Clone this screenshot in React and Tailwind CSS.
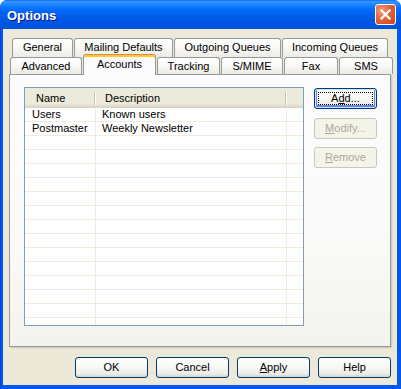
const FONT = "font-['Liberation_Sans',Arial,sans-serif]";

function Tab({ w, children, selected }) {
  if (selected) {
    return (
      <div
        className={`relative z-10 -mt-[3px] h-[21px] ${w} shrink-0 rounded-t-[3px] border border-b-0 border-[#919B9C] border-t-[#E68B2C] bg-[#FCFCFE] flex items-start justify-center pt-[3px] shadow-[inset_0_2px_0_#FFC83C]`}
      >
        <span className="leading-[13px]">{children}</span>
      </div>
    );
  }
  return (
    <div
      className={`h-full ${w} shrink-0 rounded-t-[3px] border border-b-0 border-[#919B9C] bg-[linear-gradient(to_bottom,#FFFFFF_0%,#FAFAF8_40%,#ECEBE5_100%)] flex items-start justify-center pt-[2px]`}
    >
      <span className="leading-[13px]">{children}</span>
    </div>
  );
}

function Btn({ children, w = "w-[73px]", disabled, isDefault, className = "" }) {
  if (disabled) {
    return (
      <div
        className={`${w} h-[21px] shrink-0 rounded-[3px] border border-[#C9C7BA] bg-[#F5F4EA] text-[#ACA899] flex items-center justify-center ${className}`}
      >
        {children}
      </div>
    );
  }
  return (
    <div
      className={`relative ${w} h-[21px] shrink-0 rounded-[3px] border border-[#003C74] bg-[linear-gradient(to_bottom,#FFFFFF_0%,#F7F7F4_50%,#ECEBE6_85%,#D6D0C5_100%)] flex items-center justify-center ${
        isDefault ? "shadow-[inset_0_0_0_1px_#CEE7FF,inset_0_-1px_0_2px_#6982EE]" : ""
      } ${className}`}
    >
      {isDefault && (
        <div className="absolute inset-[3px] border border-dotted border-[#000000]" />
      )}
      <span className="relative">{children}</span>
    </div>
  );
}

const rows = [
  ["Users", "Known users"],
  ["Postmaster", "Weekly Newsletter"],
];

export default function App() {
  const allRows = [];
  for (let i = 0; i < 16; i++) allRows.push(rows[i] || ["", ""]);
  return (
    <div
      className={`w-[401px] h-[389px] flex flex-col bg-[linear-gradient(to_right,#0831D9_0px,#0055EA_1px,#0058EE_3px)] ${FONT} text-[11px] text-black overflow-hidden rounded-t-[7px]`}
    >
      {/* Title bar */}
      <div className="h-[29px] shrink-0 flex items-center pl-[7px] pr-[5px] rounded-t-[7px] bg-[linear-gradient(to_bottom,#0058EE_0px,#3A93FF_1px,#288EFF_3px,#127DFF_6px,#0369FC_10px,#0262EE_14px,#0057E5_20px,#0054E3_26px,#0050DC_29px)]">
        <span className="text-white font-bold text-[13px] leading-none pt-[1px] [text-shadow:1px_1px_0_#0A1883]">
          Options
        </span>
        <div className="ml-auto w-[21px] h-[21px] rounded-[3px] border border-white bg-[radial-gradient(circle_at_30%_30%,#F29C7E_0%,#E5633A_45%,#C7441A_100%)] flex items-center justify-center">
          <svg width="11" height="11" viewBox="0 0 11 11">
            <path d="M1.5 1.5 L9.5 9.5 M9.5 1.5 L1.5 9.5" stroke="#FFFFFF" strokeWidth="2.2" strokeLinecap="square" />
          </svg>
        </div>
      </div>

      {/* Client area */}
      <div className="flex-1 ml-[3px] mr-[4px] mb-[4px] bg-[#ECE9D8] flex flex-col pt-[8px]">
        {/* Tabs */}
        <div className="mx-[6px] h-[37px] flex flex-col">
          <div className="h-[20px] pt-[1px] pl-[3px] flex gap-[1px]">
            <Tab w="w-[61px]">General</Tab>
            <Tab w="w-[99px]">Mailing Defaults</Tab>
            <Tab w="w-[107px]">Outgoing Queues</Tab>
            <Tab w="w-[106px]">Incoming Queues</Tab>
          </div>
          <div className="h-[17px] pl-[1px] flex gap-[1px]">
            <Tab w="w-[72px]">Advanced</Tab>
            <Tab w="w-[73px]" selected>
              Accounts
            </Tab>
            <Tab w="w-[63px]">Tracking</Tab>
            <Tab w="w-[62px]">S/MIME</Tab>
            <Tab w="w-[54px]">Fax</Tab>
            <Tab w="w-[54px]">SMS</Tab>
          </div>
        </div>

        {/* Panel */}
        <div className="mx-[6px] h-[273px] border border-[#919B9C] bg-[linear-gradient(to_bottom,#FCFCFE_0%,#FAFAF9_60%,#F4F3EE_100%)] shadow-[1px_1px_0_#D0CDBF,2px_2px_0_#E3E0D0] flex items-start pl-[14px] pt-[12px]">
          {/* List */}
          <div className="w-[280px] h-[239px] border border-[#7F9DB9] bg-white flex flex-col overflow-hidden">
            <div className="h-[20px] shrink-0 flex bg-[linear-gradient(to_bottom,#EBEADB_0%,#EBEADB_80%,#E5E2D2_85%,#D6D2C2_100%)]">
              <div className="w-[71px] flex items-center pl-[11px] relative">
                Name
                <div className="absolute right-0 top-[4px] bottom-[3px] w-[2px] border-l border-[#C7C5B2] border-r border-r-white" />
              </div>
              <div className="w-[191px] flex items-center pl-[9px] relative">
                Description
                <div className="absolute right-0 top-[4px] bottom-[3px] w-[2px] border-l border-[#C7C5B2] border-r border-r-white" />
              </div>
              <div className="flex-1" />
            </div>
            {allRows.map((r, i) => (
              <div key={i} className="h-[14px] shrink-0 flex border-b border-[#EFEBDE]">
                <div className="w-[71px] border-r border-[#EFEBDE] pl-[7px] leading-[13px] whitespace-nowrap">
                  {r[0]}
                </div>
                <div className="w-[191px] border-r border-[#EFEBDE] pl-[6px] leading-[13px] whitespace-nowrap">
                  {r[1]}
                </div>
                <div className="flex-1" />
              </div>
            ))}
          </div>

          {/* Side buttons */}
          <div className="ml-[10px] pt-[1px] flex flex-col">
            <Btn w="w-[63px]" isDefault>
              A<span className="underline">d</span>d...
            </Btn>
            <Btn w="w-[63px]" disabled className="mt-[9px]">
              <span className="underline">M</span>odify...
            </Btn>
            <Btn w="w-[63px]" disabled className="mt-[8px]">
              <span className="underline">R</span>emove
            </Btn>
          </div>
        </div>

        {/* Bottom buttons */}
        <div className="mt-[10px] flex justify-end gap-[8px] pr-[6px]">
          <Btn>OK</Btn>
          <Btn>Cancel</Btn>
          <Btn>
            <span className="underline">A</span>pply
          </Btn>
          <Btn>Help</Btn>
        </div>
      </div>
    </div>
  );
}
